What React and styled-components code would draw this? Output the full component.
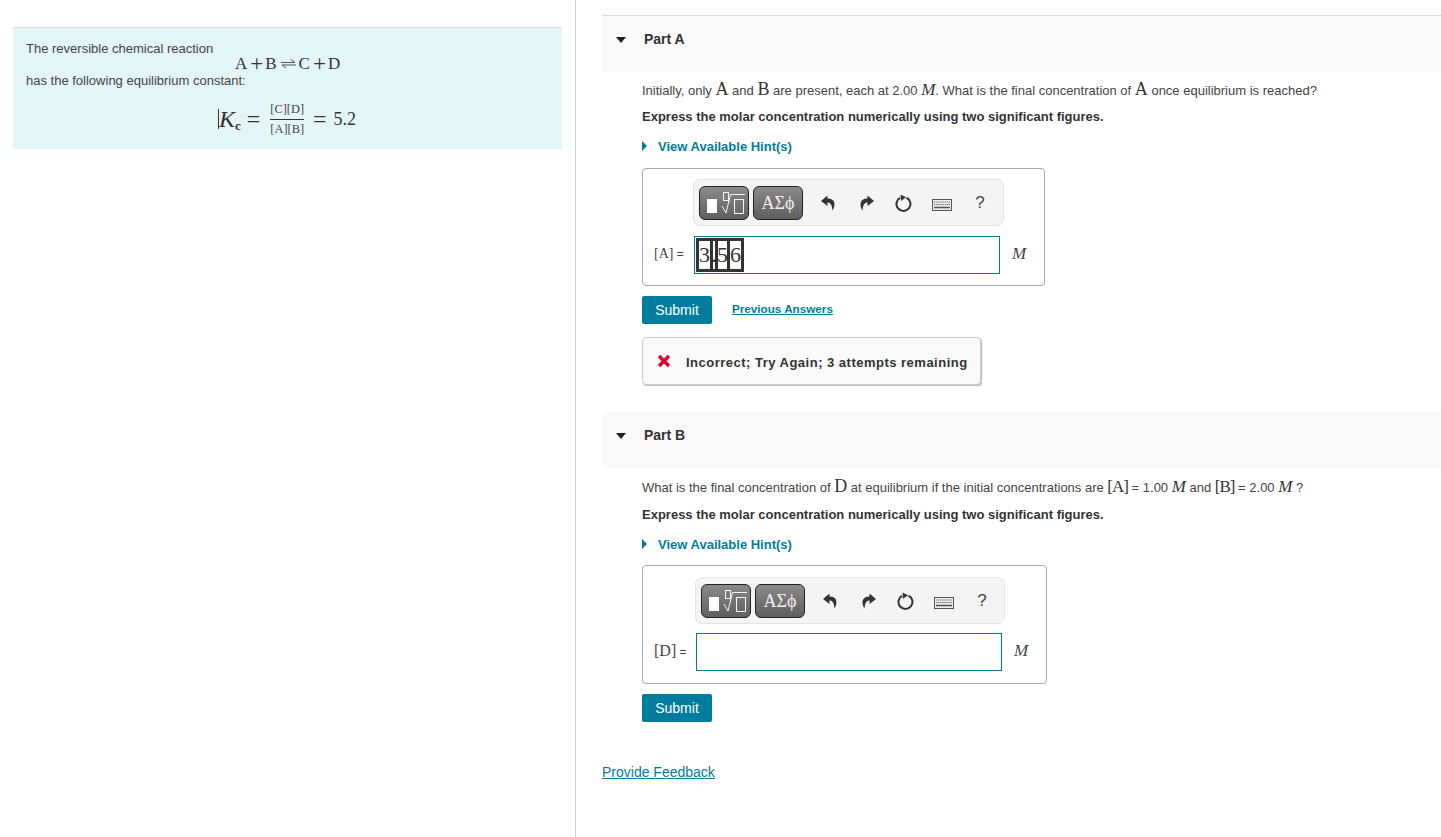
import styled, { createGlobalStyle } from 'styled-components';

const Global = createGlobalStyle`
  html, body { margin: 0; padding: 0; background: #fff; }
  body { font-family: "Liberation Sans", Arial, sans-serif; font-size: 13px; color: #444; }
`;

const Page = styled.div`
  display: flex;
  width: 1441px;
  height: 837px;
  overflow: hidden;
`;

const LeftCol = styled.div`
  box-sizing: border-box;
  width: 576px;
  flex: none;
  padding: 27px 13px 0;
  border-right: 1px solid #ccc;
`;

const Intro = styled.div`
  box-sizing: border-box;
  width: 549px;
  height: 122px;
  padding: 13px 13px 0;
  background: #e4f5f5;
  border-top: 1px solid #ddd;
  line-height: 15px;
`;

const Math = styled.span`
  font-family: "Liberation Serif", "Times New Roman", serif;
  font-size: ${({ $size }) => $size || 17}px;
  color: ${({ $dark }) => ($dark ? '#333' : 'inherit')};
  font-style: ${({ $italic }) => ($italic ? 'italic' : 'normal')};
  letter-spacing: ${({ $tight }) => ($tight ? '-1px' : 'normal')};
  line-height: 1;
`;

const Reaction = styled.div`
  box-sizing: border-box;
  display: flex;
  align-items: center;
  height: 17px;
  padding-bottom: 2px;
  margin-left: 209px;
`;

const Plus = styled.span`
  margin: 0 2px 0 3px;
  font-family: "Liberation Serif", serif;
  font-size: 23px;
  font-weight: normal;
  color: #333;
`;

const Arrows = styled.svg`
  margin: 0 3px 0 4px;
`;

const IntroLine = styled.div`
  height: 15px;
`;

const Equation = styled.div`
  display: flex;
  align-items: center;
  height: 34px;
  margin: 14px 0 0 192px;
  color: #333;
`;

const Cursor = styled.span`
  width: 1px;
  height: 20px;
  background: #333;
`;

const Sub = styled.span`
  align-self: flex-end;
  margin: 0 6px 4px 0;
  font-family: "Liberation Serif", serif;
  font-size: 13px;
  font-weight: bold;
  line-height: 12px;
`;

const Fraction = styled.span`
  display: inline-flex;
  flex-direction: column;
  align-items: center;
  margin: 0 9px 0 10px;
  font-family: "Liberation Serif", serif;
  font-size: 12.4px;
  line-height: 19px;
  color: #444;

  span + span {
    border-top: 1px solid #333;
  }
`;

const EqualsGap = styled.span`
  margin-right: 7px;
`;

const RightCol = styled.div`
  flex: 1;
  padding: 15px 0 0 26px;
`;

const PartHeader = styled.div`
  box-sizing: border-box;
  display: flex;
  height: ${({ $first }) => ($first ? 57 : 56)}px;
  margin-top: ${({ $first }) => ($first ? 0 : 27)}px;
  padding: 15px 0 0 14px;
  background: #f9f9f9;
  border-top: ${({ $first }) => ($first ? '1px solid #ddd' : 'none')};
  color: #333;
  font-size: 14px;
  font-weight: bold;
  line-height: 16px;
`;

const Caret = styled.span`
  width: 0;
  height: 0;
  margin: 6px 18px 0 0;
  border-left: 5px solid transparent;
  border-right: 5px solid transparent;
  border-top: 6px solid #222;
`;

const PartBody = styled.div`
  padding-left: 40px;
`;

const Question = styled.div`
  height: 20px;
  margin-top: ${({ $b }) => ($b ? 9 : 8)}px;
  line-height: 20px;
  white-space: nowrap;
`;

const Instruction = styled.div`
  height: 16px;
  margin-top: ${({ $b }) => ($b ? 10 : 9)}px;
  line-height: 16px;
  color: #333;
  font-weight: bold;
`;

const Hint = styled.div`
  display: flex;
  align-items: center;
  height: 16px;
  margin-top: 13px;
  color: #007c9e;
  font-weight: bold;
`;

const HintCaret = styled.span`
  margin-right: 11px;
  border-top: 5px solid transparent;
  border-bottom: 5px solid transparent;
  border-left: 5px solid #007c9e;
`;

const AnswerBox = styled.div`
  box-sizing: border-box;
  width: ${({ $wide }) => ($wide ? 405 : 403)}px;
  height: ${({ $wide }) => ($wide ? 119 : 118)}px;
  margin-top: ${({ $wide }) => ($wide ? 13 : 14)}px;
  padding: ${({ $wide }) => ($wide ? '11px 0 0 11px' : '10px 0 0 11px')};
  border: 1px solid #aaa;
  border-radius: 4px;
`;

const Toolbar = styled.div`
  box-sizing: border-box;
  display: flex;
  align-items: center;
  width: ${({ $wide }) => ($wide ? 310 : 311)}px;
  height: 47px;
  margin-left: ${({ $wide }) => ($wide ? 41 : 39)}px;
  padding-left: 5px;
  background: #f4f4f4;
  border: 1px solid #e4e4e4;
  border-radius: 7px;
`;

const TemplateButton = styled.div`
  box-sizing: border-box;
  display: flex;
  align-items: center;
  justify-content: center;
  width: 50px;
  height: 34px;
  margin-right: 4px;
  padding-top: 1px;
  background: linear-gradient(#8a8a8a, #5f5f5f);
  border: 1px solid #222;
  border-radius: 6px;
  color: #f0f0f0;
  font-family: "Liberation Serif", serif;
  font-size: 18px;
`;

const ToolIcon = styled.span`
  display: flex;
  align-items: center;
  justify-content: center;
  width: 38px;
  height: 34px;
  color: #444;
  font-size: 17px;

  &:nth-child(3) {
    margin-left: 2px;
  }
`;

const InputRow = styled.div`
  display: flex;
  align-items: center;
  margin-top: ${({ $wide }) => ($wide ? 9 : 10)}px;
`;

const Label = styled.div`
  box-sizing: border-box;
  width: ${({ $wide }) => ($wide ? 42 : 40)}px;
  flex: none;
  margin-bottom: 2px;
  white-space: nowrap;
  font-size: 12px;
`;

const AnswerInput = styled.div`
  box-sizing: border-box;
  display: flex;
  align-items: center;
  width: 306px;
  height: 38px;
  padding-left: 1px;
  border: 1px solid #007c9e;
`;

const Digit = styled.span`
  box-sizing: border-box;
  display: flex;
  align-items: center;
  justify-content: center;
  width: ${({ $w }) => $w}px;
  height: 34px;
  padding-bottom: 1px;
  border: 3px solid #333;
  margin-right: -3px;
  color: #333;
  font-family: "Liberation Serif", serif;
  font-size: 22px;
`;

const Unit = styled.div`
  margin: 0 0 3px 12px;
  font-family: "Liberation Serif", serif;
  font-style: italic;
  font-size: 17px;
`;

const Actions = styled.div`
  display: flex;
  align-items: flex-start;
  margin-top: 10px;
`;

const Submit = styled.button`
  width: 70px;
  height: 28px;
  padding: 0 0 1px;
  background: #007c9e;
  border: none;
  border-radius: 2px;
  color: #fff;
  font-family: inherit;
  font-size: 14px;
`;

const PrevLink = styled.a`
  margin: 5px 0 0 20px;
  color: #007c9e;
  font-size: 11.7px;
  font-weight: bold;
  line-height: 16px;
  text-decoration: underline;
`;

const Feedback = styled.div`
  box-sizing: border-box;
  display: flex;
  align-items: center;
  width: 339px;
  height: 48px;
  margin-top: 13px;
  padding-left: 14px;
  background: #f9f9f9;
  border: 1px solid #ccc;
  border-radius: 4px;
  box-shadow: 1px 1px 1px #bbb;
  color: #333;
  font-weight: bold;
  letter-spacing: 0.49px;
`;

const FeedbackText = styled.span`
  margin: 2px 0 0 15px;
`;

const FeedbackLink = styled.a`
  display: block;
  margin-top: 42px;
  color: #007c9e;
  font-size: 14px;
  line-height: 16px;
  text-decoration: underline;
`;

const M = () => <Math $italic $dark $size={17}>M</Math>;
const S = ({ children }) => <Math $size={18} $dark>{children}</Math>;
const Bracket = ({ children }) => <Math $size={17} $dark $tight>{children}</Math>;

function TemplateIcon() {
  return (
    <svg width="48" height="32" viewBox="0 0 48 32" fill="none" stroke="#f4f4f4">
      <rect x="7" y="12" width="10" height="14" fill="#fff" stroke="none" />
      <rect x="34.5" y="12.5" width="9" height="14" />
      <rect x="23.5" y="5.5" width="5" height="8" />
      <path d="M22 19 L26 26 L30.5 7.5 H45" />
    </svg>
  );
}

const Undo = ({ flip }) => (
  <svg width="15" height="16" viewBox="0 0 15 16" style={flip ? { transform: 'scaleX(-1)' } : undefined}>
    <path d="M6.5 0.5 L0 6 L6.5 11 V7.5 C9.5 7.5 11 10 11.5 15.5 C14.5 11 15 3.5 6.5 3.5 Z" fill="#333" />
  </svg>
);

const Reset = () => (
  <svg width="18" height="18" viewBox="0 0 18 18" fill="none">
    <path d="M11.5 3.6 A7 7 0 1 1 5 3.8" stroke="#333" strokeWidth="2" />
    <path d="M5.5 0.5 L11 3.2 L6 7 Z" fill="#333" />
  </svg>
);

const Keyboard = () => (
  <svg width="20" height="12" viewBox="0 0 20 12" style={{ marginTop: 4 }}>
    <rect x="0.5" y="0.5" width="19" height="11" fill="#eee" stroke="#555" />
    <path d="M2 3 h16 M2 5.5 h16" stroke="#666" strokeWidth="1.2" strokeDasharray="1.3 0.8" />
    <path d="M2 8.5 h16" stroke="#555" strokeWidth="1.6" />
  </svg>
);

function MathToolbar({ wide }) {
  return (
    <Toolbar $wide={wide}>
      <TemplateButton><TemplateIcon /></TemplateButton>
      <TemplateButton>ΑΣϕ</TemplateButton>
      <ToolIcon><Undo /></ToolIcon>
      <ToolIcon><Undo flip /></ToolIcon>
      <ToolIcon><Reset /></ToolIcon>
      <ToolIcon><Keyboard /></ToolIcon>
      <ToolIcon>?</ToolIcon>
    </Toolbar>
  );
}

function Answer({ wide, label, children }) {
  return (
    <AnswerBox $wide={wide}>
      <MathToolbar wide={wide} />
      <InputRow $wide={wide}>
        <Label $wide={wide}>
          <Math $size={wide ? 16 : 14}>[{label}]</Math> =
        </Label>
        <AnswerInput>{children}</AnswerInput>
        <Unit>M</Unit>
      </InputRow>
    </AnswerBox>
  );
}

export default function App() {
  return (
    <Page>
      <Global />
      <LeftCol>
        <Intro>
          <IntroLine>The reversible chemical reaction</IntroLine>
          <Reaction>
            <Math $dark>A</Math>
            <Plus>+</Plus>
            <Math $dark>B</Math>
            <Arrows width="15" height="9" viewBox="0 0 15 9" fill="none" stroke="#555">
              <path d="M0 3.5 H14 L10 0.5" />
              <path d="M15 6 H1 L5 9" />
            </Arrows>
            <Math $dark>C</Math>
            <Plus>+</Plus>
            <Math $dark>D</Math>
          </Reaction>
          <IntroLine>has the following equilibrium constant:</IntroLine>
          <Equation>
            <Cursor />
            <Math $italic $size={24}>K</Math>
            <Sub>c</Sub>
            <Math $size={24}>=</Math>
            <Fraction>
              <span>[C][D]</span>
              <span>[A][B]</span>
            </Fraction>
            <EqualsGap><Math $size={24}>=</Math></EqualsGap>
            <Math $size={18}>5.2</Math>
          </Equation>
        </Intro>
      </LeftCol>
      <RightCol>
        <PartHeader $first><Caret />Part A</PartHeader>
        <PartBody>
          <Question>
            Initially, only <S>A</S> and <S>B</S> are present, each at 2.00 <M />. What is the final concentration of <S>A</S> once equilibrium is reached?
          </Question>
          <Instruction>Express the molar concentration numerically using two significant figures.</Instruction>
          <Hint><HintCaret />View Available Hint(s)</Hint>
          <Answer label="A">
            <Digit $w={17}>3</Digit>
            <Digit $w={8}>.</Digit>
            <Digit $w={15}>5</Digit>
            <Digit $w={17}>6</Digit>
          </Answer>
          <Actions>
            <Submit>Submit</Submit>
            <PrevLink>Previous Answers</PrevLink>
          </Actions>
          <Feedback>
            <svg width="14" height="14" viewBox="0 0 14 14">
              <path d="M2 2 L12 12 M12 2 L2 12" stroke="#e0002a" strokeWidth="3.4" />
            </svg>
            <FeedbackText>Incorrect; Try Again; 3 attempts remaining</FeedbackText>
          </Feedback>
        </PartBody>
        <PartHeader><Caret />Part B</PartHeader>
        <PartBody>
          <Question $b>
            What is the final concentration of <S>D</S> at equilibrium if the initial concentrations are <Bracket>[A]</Bracket> = 1.00 <M /> and <Bracket>[B]</Bracket> = 2.00 <M /> ?
          </Question>
          <Instruction $b>Express the molar concentration numerically using two significant figures.</Instruction>
          <Hint><HintCaret />View Available Hint(s)</Hint>
          <Answer wide label="D" />
          <Actions>
            <Submit>Submit</Submit>
          </Actions>
        </PartBody>
        <FeedbackLink>Provide Feedback</FeedbackLink>
      </RightCol>
    </Page>
  );
}
